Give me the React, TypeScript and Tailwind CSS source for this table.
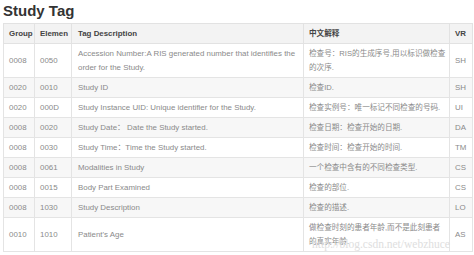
import React from "react";

type Row = { g: string; e: string; d: React.ReactNode; c: React.ReactNode; vr: string };

const rows: Row[] = [
  {
    g: "0008",
    e: "0050",
    d: (
      <>
        Accession Number:A RIS generated number that identifies the
        <br />
        order for the Study.
      </>
    ),
    c: (
      <>
        检查号：RIS的生成序号,用以标识做检查
        <br />
        的次序.
      </>
    ),
    vr: "SH",
  },
  { g: "0020", e: "0010", d: "Study ID", c: "检查ID.", vr: "SH" },
  { g: "0020", e: "000D", d: "Study Instance UID: Unique identifier for the Study.", c: "检查实例号：唯一标记不同检查的号码.", vr: "UI" },
  { g: "0008", e: "0020", d: "Study Date：  Date the Study started.", c: "检查日期：检查开始的日期.", vr: "DA" },
  { g: "0008", e: "0030", d: "Study Time：Time the Study started.", c: "检查时间：检查开始的时间.", vr: "TM" },
  { g: "0008", e: "0061", d: "Modalities in Study", c: "一个检查中含有的不同检查类型.", vr: "CS" },
  { g: "0008", e: "0015", d: "Body Part Examined", c: "检查的部位.", vr: "CS" },
  { g: "0008", e: "1030", d: "Study Description", c: "检查的描述.", vr: "LO" },
  {
    g: "0010",
    e: "1010",
    d: "Patient's Age",
    c: (
      <>
        做检查时刻的患者年龄,而不是此刻患者
        <br />
        的真实年龄.
      </>
    ),
    vr: "AS",
  },
];

const font = {
  fontFamily: '"Liberation Sans", Arial, "Noto Sans CJK SC", sans-serif',
};

export default function App() {
  return (
    <div className="relative w-[474px] h-[255px] bg-white overflow-hidden" style={font}>
      <div className="pl-[3px] pt-[1px] text-[15px] leading-[20px] font-bold text-[#333]">Study Tag</div>
      <table className="ml-[3px] mt-[2px] w-[469px] table-fixed border-collapse text-[7.9px] leading-[14px] text-[#8a8a8a]">
        <colgroup>
          <col className="w-[31px]" />
          <col className="w-[37px]" />
          <col className="w-[232px]" />
          <col className="w-[146px]" />
          <col className="w-[23px]" />
        </colgroup>
        <thead>
          <tr className="bg-[#f3f3f3] text-[#444] font-bold">
            <th className="border border-[#e2e2e2] pl-[5px] pt-[3px] pb-[2px] text-left font-bold whitespace-nowrap overflow-hidden">Group</th>
            <th className="border border-[#e2e2e2] pl-[5px] pt-[3px] pb-[2px] text-left font-bold whitespace-nowrap overflow-hidden">Elemen</th>
            <th className="border border-[#e2e2e2] pl-[6px] pt-[3px] pb-[2px] text-left font-bold whitespace-nowrap">Tag Description</th>
            <th className="border border-[#e2e2e2] pl-[5px] pt-[3px] pb-[2px] text-left font-bold whitespace-nowrap text-[7.6px]">中文解释</th>
            <th className="border border-[#e2e2e2] pl-[5px] pt-[3px] pb-[2px] text-left font-bold whitespace-nowrap">VR</th>
          </tr>
        </thead>
        <tbody>
          {rows.map((r, i) => (
            <tr key={i} className={i % 2 === 1 ? "bg-[#f7f7f7]" : "bg-white"}>
              <td className="border border-[#e4e4e4] pl-[5px] pt-[3px] pb-[2px] align-middle whitespace-nowrap">{r.g}</td>
              <td className="border border-[#e4e4e4] pl-[5px] pt-[3px] pb-[2px] align-middle whitespace-nowrap">{r.e}</td>
              <td className="border border-[#e4e4e4] pl-[6px] pt-[3px] pb-[2px] align-middle whitespace-nowrap overflow-hidden">{r.d}</td>
              <td className="border border-[#e4e4e4] pl-[5px] pt-[3px] pb-[2px] align-middle whitespace-nowrap overflow-hidden text-[7.6px]">{r.c}</td>
              <td className="border border-[#e4e4e4] pl-[5px] pt-[3px] pb-[2px] align-middle whitespace-nowrap">{r.vr}</td>
            </tr>
          ))}
        </tbody>
      </table>
      <div
        className="absolute left-[312px] top-[238px] text-[11.5px] leading-[12px] text-[#dedede] whitespace-nowrap pointer-events-none"
        style={{ fontFamily: '"Liberation Serif", "Times New Roman", serif' }}
      >
        http://blog.csdn.net/webzhuce
      </div>
    </div>
  );
}
